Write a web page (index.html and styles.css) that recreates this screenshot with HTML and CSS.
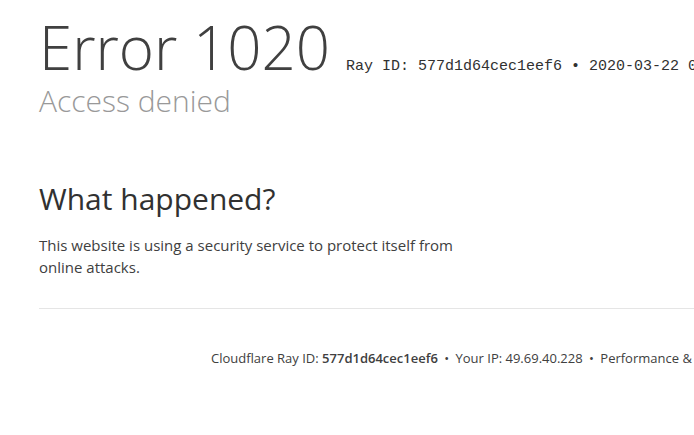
FILE: index.html
```html
<!DOCTYPE html>
<html>
<head>
<meta charset="utf-8">
<link rel="stylesheet" href="styles.css">
</head>
<body>
<div class="wrapper">
  <header class="header">
    <h1 class="title"><span class="code">Error 1020</span><small class="ray">Ray ID: 577d1d64cec1eef6 &bull; 2020-03-22 07:23:48 UTC</small></h1>
    <h2 class="subtitle">Access denied</h2>
  </header>
  <section class="section">
    <h2 class="section-title">What happened?</h2>
    <p class="text">This website is using a security service to protect itself from online attacks.</p>
  </section>
  <footer class="footer">
    <p class="footer-text">
      <span>Cloudflare Ray ID: <strong>577d1d64cec1eef6</strong></span>
      <span class="sep">&bull;</span>
      <span>Your IP: 49.69.40.228</span>
      <span class="sep">&bull;</span>
      <span>Performance &amp; security by Cloudflare</span>
    </p>
  </footer>
</div>
</body>
</html>
```
FILE: styles.css
```css
html, body {
  margin: 0;
  padding: 0;
  background: #fff;
  overflow: hidden;
}
body {
  font-family: "Open Sans", "Liberation Sans", sans-serif;
  color: #404040;
}
.wrapper {
  width: 1000px;
  padding: 0 0 0 39px;
}
.header {
  padding-top: 17px;
}
.title {
  margin: 0;
  font-size: 60px;
  font-weight: 300;
  line-height: 60px;
  color: #404040;
  display: flex;
  align-items: baseline;
  white-space: nowrap;
}
.ray {
  font-family: "Liberation Mono", "Courier New", monospace;
  font-size: 15px;
  line-height: 15px;
  font-weight: 400;
  color: #313131;
  margin-left: 16px;
}
.subtitle {
  margin: 6px 0 0;
  font-size: 30px;
  font-weight: 300;
  line-height: 36px;
  color: #999;
}
.section {
  padding-top: 60px;
  width: 440px;
}
.section-title {
  margin: 0 0 15px;
  font-size: 30px;
  font-weight: 400;
  line-height: 40px;
  color: #313131;
}
.text {
  margin: 0;
  font-size: 15px;
  line-height: 22px;
  color: #404040;
}
.footer {
  margin-top: 30px;
  border-top: 1px solid #e5e5e5;
  padding-top: 39px;
}
.footer-text {
  margin: 0;
  font-size: 13px;
  line-height: 20px;
  color: #404040;
  padding-left: 172px;
  white-space: nowrap;
}
.footer-text strong {
  font-weight: 600;
}
.sep {
  margin: 0 3px;
}
```
